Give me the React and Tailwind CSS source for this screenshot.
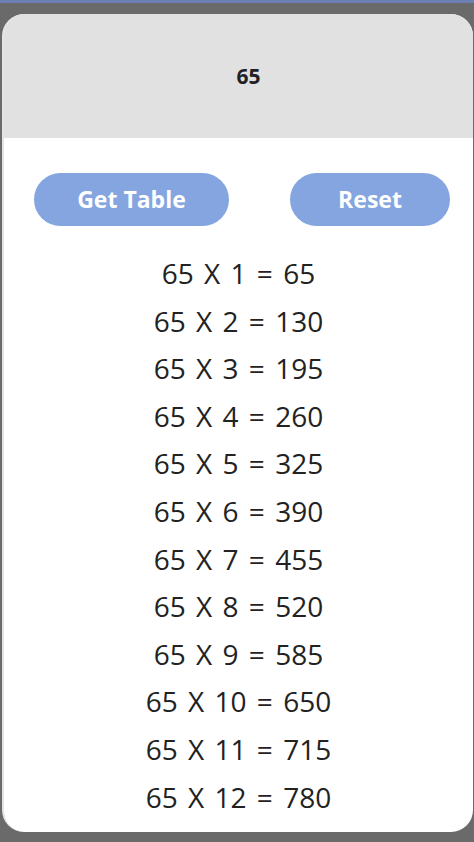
import React, { useState } from 'react';

const App = () => {
  const [value, setValue] = useState('65');
  const [table, setTable] = useState(65);

  const rows = Array.from({ length: 12 }, (_, i) => i + 1);

  return (
    <div
      className="h-[842px] w-full overflow-hidden bg-[#6a6a6a] border-t-[3px] border-[#6d80b6] pt-[11px] pl-[2px] pr-[1px]"
      style={{ fontFamily: '"Open Sans", "Noto Sans", sans-serif' }}
    >
      <div className="h-[818px] bg-white rounded-[22px] overflow-hidden border-l-2 border-[#e4e4e4] flex flex-col">
        <input
          value={value}
          onChange={(e) => setValue(e.target.value)}
          className="h-[124px] w-full shrink-0 bg-[#e1e1e1] pl-[20px] text-center text-[21px] font-bold text-[#222] outline-none"
        />
        <div className="flex justify-between pl-[30px] pr-[23px] mt-[35px]">
          <button
            onClick={() => setTable(Number(value) || 0)}
            className="w-[195px] h-[53px] rounded-full bg-[#84a5e0] text-white text-[23px] font-bold"
          >
            Get Table
          </button>
          <button
            onClick={() => {
              setValue('');
              setTable(0);
            }}
            className="w-[160px] h-[53px] rounded-full bg-[#84a5e0] text-white text-[23px] font-bold"
          >
            Reset
          </button>
        </div>
        <div className="mt-[24px] flex flex-col items-center text-[28px] text-[#222] [word-spacing:3px]">
          {rows.map((n) => (
            <div key={n} className="h-[47.6px] leading-[47.6px]">
              {table} X {n} = {table * n}
            </div>
          ))}
        </div>
      </div>
    </div>
  );
};

export default App;
